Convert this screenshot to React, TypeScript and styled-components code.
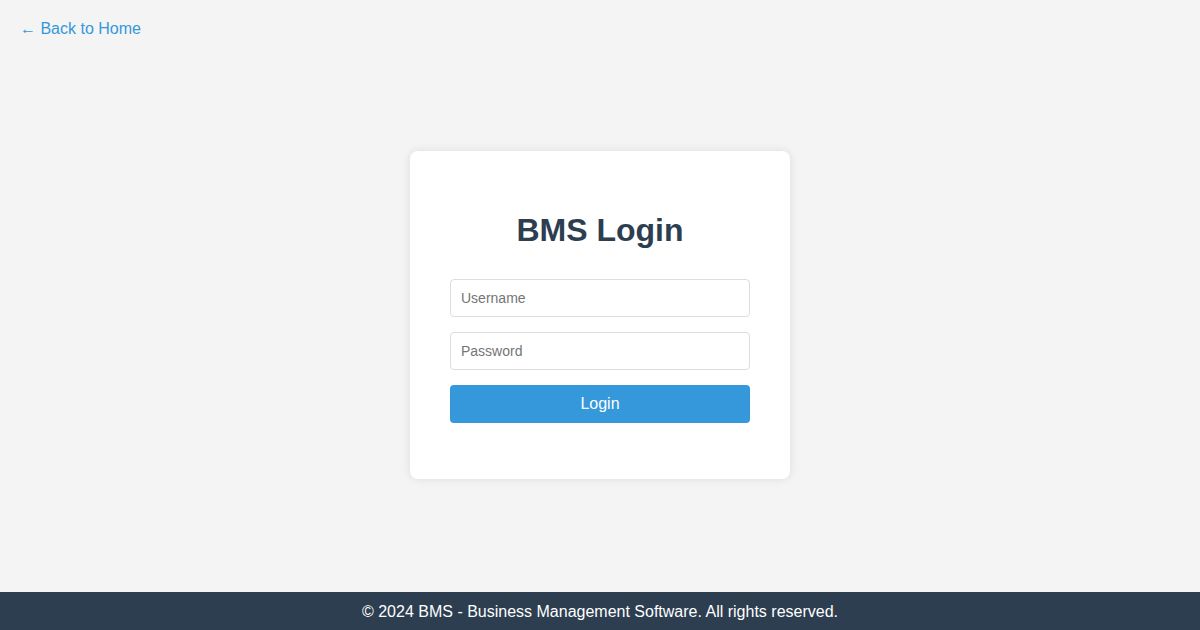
import React from "react";
import styled, { createGlobalStyle } from "styled-components";

const Global = createGlobalStyle`
  html, body { margin: 0; padding: 0; }
  body {
    background: #f4f4f4;
    font-family: "Liberation Sans", Arial, sans-serif;
    color: #333;
  }
  * { box-sizing: border-box; }
`;

const Page = styled.div`
  display: flex;
  flex-direction: column;
  height: 100vh;
`;

const TopBar = styled.div`
  padding: 20px 20px 18px;
  height: 56px;
`;

const BackLink = styled.a`
  color: #3498db;
  font-size: 16px;
  line-height: 18px;
  text-decoration: none;
`;

const Main = styled.main`
  flex: 1;
  display: flex;
  align-items: center;
  justify-content: center;
  padding-bottom: 18px;
`;

const Card = styled.div`
  width: 380px;
  background: #fff;
  border-radius: 8px;
  box-shadow: 0 0 10px rgba(0, 0, 0, 0.1);
  padding: 40px 40px 56px;
`;

const Title = styled.h2`
  margin: 21px 0 30px;
  text-align: center;
  font-size: 32px;
  line-height: 37px;
  font-weight: bold;
  color: #2c3e50;
`;

const Form = styled.form`
  display: flex;
  flex-direction: column;
  gap: 15px;
`;

const Input = styled.input`
  width: 100%;
  height: 38px;
  padding: 10px;
  border: 1px solid #ddd;
  border-radius: 4px;
  font-family: "Liberation Sans", Arial, sans-serif;
  font-size: 14px;
  color: #333;
  background: #fff;
  outline: none;
  &::placeholder { color: #757575; }
`;

const Button = styled.button`
  width: 100%;
  height: 38px;
  border: none;
  border-radius: 4px;
  background: #3498db;
  color: #fff;
  font-family: "Liberation Sans", Arial, sans-serif;
  font-size: 16px;
  cursor: pointer;
`;

const Footer = styled.footer`
  background: #2c3e50;
  color: #fff;
  text-align: center;
  padding: 11px 10px 9px;
  font-size: 16px;
  line-height: 18px;
`;

export default function App() {
  return (
    <>
      <Global />
      <Page>
        <TopBar>
          <BackLink href="#">← Back to Home</BackLink>
        </TopBar>
        <Main>
          <Card>
            <Title>BMS Login</Title>
            <Form onSubmit={(e) => e.preventDefault()}>
              <Input type="text" placeholder="Username" />
              <Input type="password" placeholder="Password" />
              <Button type="submit">Login</Button>
            </Form>
          </Card>
        </Main>
        <Footer>© 2024 BMS - Business Management Software. All rights reserved.</Footer>
      </Page>
    </>
  );
}
